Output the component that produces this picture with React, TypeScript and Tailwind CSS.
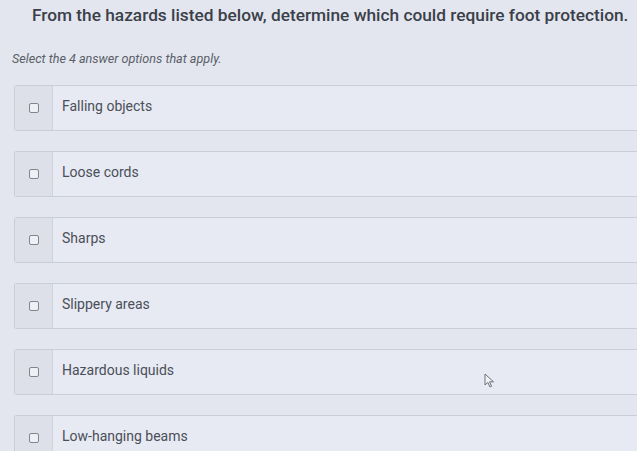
import React from 'react';

const options = [
  'Falling objects',
  'Loose cords',
  'Sharps',
  'Slippery areas',
  'Hazardous liquids',
  'Low-hanging beams',
];

const App: React.FC = () => {
  return (
    <div
      className="relative w-[637px] h-[451px] overflow-hidden bg-[#e3e6ef] text-[#3b404a]"
      style={{ fontFamily: 'Roboto, "Liberation Sans", sans-serif' }}
    >
      {/* Question */}
      <h1 className="pl-[32px] pt-[4px] text-[17.3px] leading-[22px] font-medium text-[#3a3f49] whitespace-nowrap">
        From the hazards listed below, determine which could require foot protection.
      </h1>
      <p className="pl-[12px] mt-[24px] text-[12.6px] leading-[18px] italic text-[#5a5f68]">
        Select the 4 answer options that apply.
      </p>

      {/* Answer list */}
      <div className="mt-[17px] pl-[14px] flex flex-col gap-[20px]">
        {options.map((opt) => (
          <label
            key={opt}
            className="flex h-[46px] border border-[#c9cdd6] rounded-l-[3px] border-r-0 bg-[#e7eaf2] cursor-pointer"
          >
            <div className="w-[38px] shrink-0 flex items-center justify-center bg-[#dde0e8] border-r border-[#cfd3dc]">
              <span className="w-[10px] h-[10px] border border-[#80858e] rounded-[2px] bg-[#eef0f5]"></span>
            </div>
            <span className="pl-[9px] pt-[11px] text-[14px] leading-[18px] text-[#4a4f59]">{opt}</span>
          </label>
        ))}
      </div>

      {/* Mouse cursor */}
      <svg className="absolute left-[484px] top-[373px]" width="11" height="15" viewBox="0 0 11 15">
        <path d="M1 1 L1 12 L3.8 9.4 L6 14 L7.6 13.2 L5.5 8.8 L9.5 8.8 Z" fill="#f2f3f7" stroke="#6b7079" strokeWidth="1" strokeLinejoin="round" />
      </svg>
    </div>
  );
};

export default App;
